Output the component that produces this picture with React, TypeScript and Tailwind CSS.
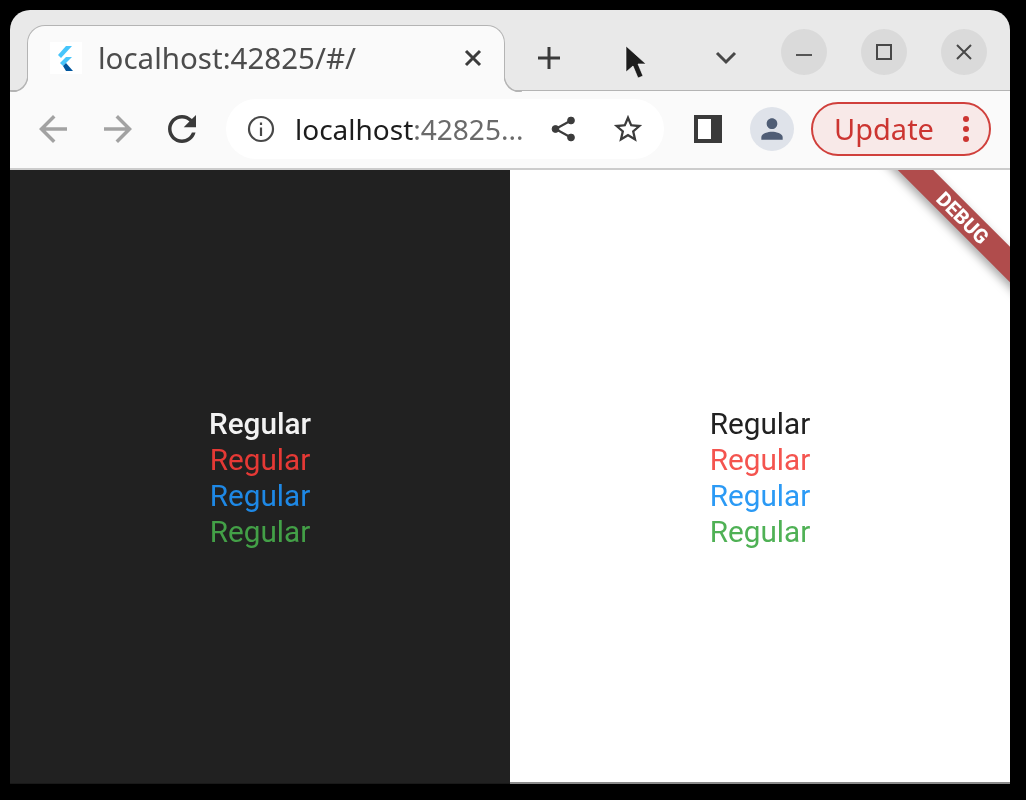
const chromeFont = { fontFamily: '"Noto Sans", "Open Sans", sans-serif' };

function Glyph({ d, className }: { d: string; className: string }) {
  return (
    <svg viewBox="0 0 24 24" className={className} fill="currentColor">
      <path d={d} />
    </svg>
  );
}

const paths = {
  back: "M20 11H7.83l5.59-5.59L12 4l-8 8 8 8 1.41-1.41L7.83 13H20v-2z",
  forward: "M4 11h12.17l-5.59-5.59L12 4l8 8-8 8-1.41-1.41L16.17 13H4v-2z",
  reload:
    "M17.65 6.35C16.2 4.9 14.21 4 12 4c-4.42 0-7.99 3.58-7.99 8s3.57 8 7.99 8c3.73 0 6.84-2.55 7.73-6h-2.08c-.82 2.33-3.04 4-5.65 4-3.31 0-6-2.69-6-6s2.69-6 6-6c1.66 0 3.14.69 4.22 1.78L13 11h7V4l-2.35 2.35z",
  star:
    "M22 9.24l-7.19-.62L12 2 9.19 8.63 2 9.24l5.46 4.73L5.82 21 12 17.27 18.18 21l-1.63-7.03L22 9.24zM12 15.4l-3.76 2.27 1-4.28-3.32-2.88 4.38-.38L12 6.1l1.71 4.04 4.38.38-3.32 2.88 1 4.28L12 15.4z",
  person:
    "M12 12c2.21 0 4-1.79 4-4s-1.79-4-4-4-4 1.79-4 4 1.79 4 4 4zm0 2c-2.67 0-8 1.34-8 4v2h16v-2c0-2.66-5.33-4-8-4z",
};

function Tab() {
  return (
    <div className="relative mt-[15px] -mb-px flex h-[67px] w-[478px] shrink-0 items-start rounded-t-[18px] border border-b-0 border-[#b4b4b4] bg-[#fafafa] pl-[22px] pt-[16px]">
      <svg viewBox="0 0 18 18" className="absolute -left-[18px] bottom-0 h-[18px] w-[18px]">
        <path d="M18 0 C18 11 11 18 0 18 L18 18 Z" fill="#fafafa" />
        <path d="M18 0 C18 11 11 18 0 18" fill="none" stroke="#b4b4b4" strokeWidth="1.5" />
      </svg>
      <svg viewBox="0 0 18 18" className="absolute -right-[18px] bottom-0 h-[18px] w-[18px]">
        <path d="M0 0 C0 11 7 18 18 18 L0 18 Z" fill="#fafafa" />
        <path d="M0 0 C0 11 7 18 18 18" fill="none" stroke="#b4b4b4" strokeWidth="1.5" />
      </svg>
      <svg viewBox="0 0 32 32" className="h-8 w-8 shrink-0 bg-white">
        <polygon points="16,4 22,4 11,16 8,13" fill="#47c5fb" />
        <polygon points="22,15 16,15 10,21 13,24" fill="#47c5fb" />
        <polygon points="13,24 16,21 23,29 16,29" fill="#00569e" />
      </svg>
      <span style={chromeFont} className="ml-4 whitespace-nowrap text-[29.5px] leading-8 text-[#4c4c4c]">
        localhost:42825/#/
      </span>
      <svg viewBox="0 0 24 24" className="absolute right-[19px] top-[20px] h-6 w-6 text-[#3c3c3c]" fill="none" stroke="currentColor" strokeWidth="3">
        <path d="M5 5 19 19M19 5 5 19" />
      </svg>
    </div>
  );
}

function WindowControls() {
  return (
    <div className="mt-[19px] flex gap-[34px] pr-[23px]">
      <div className="flex h-[46px] w-[46px] items-center justify-center rounded-full bg-[#dadada]">
        <div className="mt-[6px] h-[2px] w-4 bg-[#555555]" />
      </div>
      <div className="flex h-[46px] w-[46px] items-center justify-center rounded-full bg-[#dadada]">
        <div className="h-4 w-4 border-2 border-[#484848]" />
      </div>
      <div className="flex h-[46px] w-[46px] items-center justify-center rounded-full bg-[#dadada]">
        <svg viewBox="0 0 18 18" className="h-[18px] w-[18px] text-[#484848]" fill="none" stroke="currentColor" strokeWidth="2">
          <path d="M2 2 16 16M16 2 2 16" />
        </svg>
      </div>
    </div>
  );
}

function Toolbar() {
  return (
    <div className="flex h-[79px] shrink-0 items-center border-b-2 border-[#cccccc] bg-[#fafafa] pb-px pl-[22px]">
      <Glyph d={paths.back} className="h-[42px] w-[42px] shrink-0 text-[#a2a2a2]" />
      <Glyph d={paths.forward} className="ml-[23px] h-[42px] w-[42px] shrink-0 text-[#a2a2a2]" />
      <Glyph d={paths.reload} className="ml-[22px] h-[42px] w-[42px] shrink-0 text-[#3a3a3a]" />
      <div className="ml-[23px] flex h-[60px] w-[438px] shrink-0 items-center rounded-full bg-white pl-[21px]">
        <svg viewBox="0 0 28 28" className="h-7 w-7 shrink-0 text-[#484848]" fill="none" stroke="currentColor" strokeWidth="2.2">
          <circle cx="14" cy="14" r="12" />
          <path d="M14 12.5V21M14 7.5V10" />
        </svg>
        <span style={chromeFont} className="ml-5 w-[230px] shrink-0 whitespace-nowrap text-[28px] leading-8 text-[#1c1c1c]">
          localhost<span className="text-[#6a6a6a]">:42825...</span>
        </span>
        <svg viewBox="0 0 28 28" className="ml-[25px] h-7 w-7 shrink-0 text-[#3c3c3c]" fill="currentColor" stroke="currentColor">
          <circle cx="21" cy="5.5" r="3.4" />
          <circle cx="5.5" cy="14" r="3.4" />
          <circle cx="21" cy="22.5" r="3.4" />
          <path d="M21 5.5 5.5 14 21 22.5" fill="none" strokeWidth="2.2" />
        </svg>
        <Glyph d={paths.star} className="ml-[33px] h-[34px] w-[34px] shrink-0 text-[#3c3c3c]" />
      </div>
      <div className="ml-[30px] flex h-7 w-7 shrink-0 border-4 border-[#3a3a3a] bg-white">
        <div className="ml-auto h-full w-[7px] bg-[#3a3a3a]" />
      </div>
      <div className="ml-[28px] flex h-11 w-11 shrink-0 items-center justify-center rounded-full bg-[#dfe3ea]">
        <Glyph d={paths.person} className="h-8 w-8 text-[#4f5d75]" />
      </div>
      <div className="ml-[17px] flex h-[54px] w-[180px] shrink-0 items-center rounded-full border-2 border-[#d0403c] bg-[#f8e9e8] pl-[21px]">
        <span style={chromeFont} className="text-[29px] leading-8 text-[#cc3531]">
          Update
        </span>
        <div className="ml-auto mr-[20px] flex flex-col gap-[4px]">
          <div className="h-[6px] w-[6px] rounded-full bg-[#cc3531]" />
          <div className="h-[6px] w-[6px] rounded-full bg-[#cc3531]" />
          <div className="h-[6px] w-[6px] rounded-full bg-[#cc3531]" />
        </div>
      </div>
    </div>
  );
}

function RegularList({ colors }: { colors: string[] }) {
  return (
    <div style={{ fontFamily: "Roboto, sans-serif" }} className="text-center text-[29.7px] leading-9">
      {colors.map((c, i) => (
        <div key={i} className={c}>
          Regular
        </div>
      ))}
    </div>
  );
}

export default function App() {
  return (
    <div className="h-[800px] w-[1026px] overflow-hidden bg-black px-[10px] pt-[10px]">
      <div className="relative flex h-[774px] w-[1000px] flex-col overflow-hidden rounded-t-[20px] blur-[0.6px]">
        <div className="flex h-[81px] shrink-0 items-start border-b border-[#b4b4b4] bg-[#e9e9e9] pl-[17px]">
          <Tab />
          <div className="ml-[32px] mt-[36px] text-[#3a3a3a]">
            <svg viewBox="0 0 24 24" className="h-6 w-6" fill="none" stroke="currentColor" strokeWidth="3">
              <path d="M12 1V23M1 12H23" />
            </svg>
          </div>
          <svg viewBox="0 0 24 24" className="ml-auto mr-[43px] mt-[35px] h-6 w-6 text-[#484848]" fill="none" stroke="currentColor" strokeWidth="3">
            <path d="M3 8 12 17 21 8" />
          </svg>
          <WindowControls />
        </div>
        <Toolbar />
        <div className="flex flex-1">
          <div className="flex flex-1 items-center justify-center border-b border-[#191919] bg-[#212121] pt-[2px]">
            <RegularList colors={["text-[#f2f2f2] font-medium", "text-[#e53935]", "text-[#1e88e5]", "text-[#43a047]"]} />
          </div>
          <div className="relative flex flex-1 items-center justify-center overflow-hidden border-b-2 border-[#8a8a8a] bg-white pt-[3px]">
            <RegularList colors={["text-[#212121]", "text-[#f4544f]", "text-[#2b9af5]", "text-[#4fb155]"]} />
            <div
              style={{ fontFamily: "Roboto, sans-serif" }}
              className="absolute left-[353px] top-[35px] flex h-[25px] w-[200px] rotate-45 items-center justify-center bg-[#b04c4c] text-[20px] font-extrabold text-white shadow-[0_4px_10px_rgba(0,0,0,0.35)]"
            >
              DEBUG
            </div>
          </div>
        </div>
        <svg viewBox="0 0 24 38" className="absolute left-[614px] top-[34px] h-[38px] w-6">
          <path d="M2 2 L2 28 L9 22 L14 34 L19 32 L14 20 L22 20 Z" fill="#1d1d1d" stroke="#ffffff" strokeOpacity="0.6" strokeWidth="1" />
        </svg>
      </div>
    </div>
  );
}
